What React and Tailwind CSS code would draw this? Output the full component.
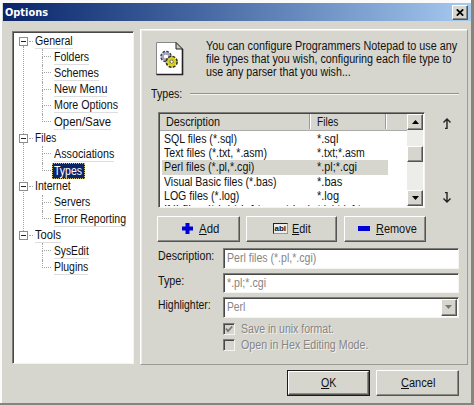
import { useLayoutEffect, useRef, useState } from "react";

/* Text squeezed horizontally to the width of the bitmap system font. */
function T({ w, children, className = "" }) {
  const ref = useRef(null);
  const [k, setK] = useState(1);
  useLayoutEffect(() => {
    setK(w / ref.current.offsetWidth);
  }, [w]);
  return (
    <span className={"block h-[14px] shrink-0 text-left leading-[14px] whitespace-nowrap " + className} style={{ width: w }}>
      <span ref={ref} className="inline-block origin-left" style={{ transform: `scaleX(${k})` }}>
        {children}
      </span>
    </span>
  );
}

const tree = [
  ["General", 38, [["Folders", 35], ["Schemes", 45], ["New Menu", 53], ["More Options", 64], ["Open/Save", 57]]],
  ["Files", 21, [["Associations", 60], ["Types", 28]]],
  ["Internet", 36, [["Servers", 36], ["Error Reporting", 72]]],
  ["Tools", 26, [["SysEdit", 35], ["Plugins", 34]]],
];

function TreeGroup({ name, w, items, last }) {
  const ruled = name === "General" || name === "Tools";
  return (
    <div className="relative">
      {!last && <div className="absolute top-[13px] bottom-[-4px] left-[9px] border-l border-dotted border-[#a5a5a5]" />}
      <div className="flex h-[16.2px] items-center">
        <svg className="ml-[5px] h-[9px] w-[9px]" viewBox="0 0 9 9" shapeRendering="crispEdges">
          <rect x=".5" y=".5" width="8" height="8" fill="#fff" stroke="#8d8d8d" />
          <path d="M2 4.5h5" stroke="#222" />
        </svg>
        <div className="ml-[1px] w-[4px] border-t border-dotted border-[#a5a5a5]" />
        <div className={"ml-[1.5px] border-b " + (ruled ? "border-[#dedede]" : "border-transparent")}>
          <T w={w}>{name}</T>
        </div>
      </div>
      {items.map(([label, lw], i) => (
        <div key={label} className="flex h-[16.2px] items-stretch">
          <div className="ml-[28px] flex w-[9px] flex-col">
            <div className="h-[8px] border-b border-l border-dotted border-[#a5a5a5]" />
            <div className={i < items.length - 1 ? "grow border-l border-dotted border-[#a5a5a5]" : "grow"} />
          </div>
          <div className="ml-[1px] flex items-center">
            {label === "Types" ? (
              <div className="border border-dotted border-[#c5b878] bg-[#0a246a] pr-[2px] pl-[1px] text-white">
                <T w={lw}>{label}</T>
              </div>
            ) : (
              <div className="ml-[2px] border-b border-[#dedede]">
                <T w={lw}>{label}</T>
              </div>
            )}
          </div>
        </div>
      ))}
    </div>
  );
}

const RAISED = "border border-t-white border-l-white border-r-[#555] border-b-[#555] bg-[#d6d6ce] shadow-[inset_-1px_-1px_0_#8a8a86] ";
const SUNKEN = "border border-t-[#7c7c78] border-l-[#7c7c78] border-r-[#f4f4f0] border-b-[#f4f4f0] shadow-[inset_1px_1px_0_#484848] ";

function Tri({ up, color = "#000" }) {
  return (
    <svg className="h-[4px] w-[7px]" viewBox="0 0 7 4">
      <path d={up ? "M0 4L3.5 0L7 4z" : "M0 0L3.5 4L7 0z"} fill={color} />
    </svg>
  );
}

const rows = [
  ["SQL files (*.sql)", 73, "*.sql", 21],
  ["Text files (*.txt, *.asm)", 103, "*.txt;*.asm", 48],
  ["Perl files (*.pl,*.cgi)", 90, "*.pl;*.cgi", 40],
  ["Visual Basic files (*.bas)", 113, "*.bas", 25],
  ["LOG files (*.log)", 75, "*.log", 22],
  ["INI files (*.ini,*.inf,*.reg,*.isu)", 148, "*.ini;*.inf;*.reg", 62],
];

function Field({ label, lw, text, tw, combo, tail = "mb-[4px]" }) {
  return (
    <div className={"flex h-[20.5px] " + tail}>
      <div className="w-[65px] pt-[1px]">
        <T w={lw}>{label}</T>
      </div>
      <div className={SUNKEN + "flex w-[236px] items-center bg-white py-[1px] pr-[1px] pl-[3px] text-[#858585]"}>
        <T w={tw}>{text}</T>
        {combo && (
          <div className={RAISED + "ml-auto flex h-[17px] w-[16px] items-center justify-center"}>
            <Tri color="#777" />
          </div>
        )}
      </div>
    </div>
  );
}

function Check({ on, text, w }) {
  return (
    <div className="flex h-[16px] items-center text-[#858585]">
      <div className={SUNKEN + "flex h-[12px] w-[12px] items-center justify-center"}>
        {on && (
          <svg className="h-[8px] w-[8px]" viewBox="0 0 8 8">
            <path d="M1 3.5L3 6L7.2 1.5" fill="none" stroke="#777" strokeWidth="1.8" />
          </svg>
        )}
      </div>
      <T w={w} className="ml-[6px] [text-shadow:1px_1px_0_#f4f4f0]">{text}</T>
    </div>
  );
}

export default function App() {
  return (
    <div className="h-[405px] w-[474px] overflow-hidden bg-[#85857f] pr-[3px] pb-[2px] font-['Liberation_Sans',Arial,sans-serif] text-[12px] text-[#111]">
      <div className="flex h-[403px] flex-col border-t-[3px] border-l-[2px] border-[#fafafa] bg-[#d6d6ce]">
        <div className="ml-[1px] flex h-[18px] shrink-0 items-center bg-linear-to-r from-[#0a246a] to-[#a6caf0] pr-[3px] pl-[2px]">
          <T w={43} className="font-['DejaVu_Sans',sans-serif] text-[10.5px] font-bold text-white">Options</T>
          <div className={RAISED + "ml-auto flex h-[15px] w-[16px] items-center justify-center"}>
            <svg className="h-[7px] w-[8px]" viewBox="0 0 8 7">
              <path d="M.8 .3L7.2 6.7M7.2 .3L.8 6.7" stroke="#000" strokeWidth="1.7" />
            </svg>
          </div>
        </div>

        <div className="flex shrink-0 pt-[8px] pl-[10px]">
          <div className={SUNKEN + "mt-[2px] h-[333px] w-[122px] bg-white pt-[1px] pl-[1px]"}>
            {tree.map(([n, w, items], i) => (
              <TreeGroup key={n} name={n} w={w} items={items} last={i === tree.length - 1} />
            ))}
          </div>

          <div className="ml-[6px] h-[336px] w-[328px] border border-t-white border-r-[#9a9a96] border-b-[#9a9a96] border-l-white shadow-[inset_1px_1px_0_#ecece8]">
            <div className="flex h-[57px] pt-[12px] pl-[15px]">
              <svg className="h-[34px] w-[28px]" viewBox="0 0 28 34">
                <path d="M.5 .5H20L26.5 7V32.5H.5z" fill="#fff" stroke="#888" />
                <path d="M26.5 7V32.5H.5" fill="none" stroke="#222" strokeWidth="1.6" />
                <path d="M20 .5L26.5 7H20z" fill="#c8c8c4" stroke="#222" />
                <circle cx="10" cy="14.5" r="4" fill="none" stroke="#34344a" strokeWidth="3.6" strokeDasharray="2.1 1" />
                <circle cx="10" cy="14.5" r="3.4" fill="none" stroke="#a4a4c4" strokeWidth="2.2" />
                <circle cx="15.7" cy="19.8" r="4.2" fill="none" stroke="#303000" strokeWidth="4" strokeDasharray="2.3 1" />
                <circle cx="15.7" cy="19.8" r="3.5" fill="none" stroke="#d8d022" strokeWidth="2.5" />
                <circle cx="15.7" cy="19.8" r="1.6" fill="#fff" stroke="#444400" strokeWidth=".7" />
              </svg>
              <div className="mt-[-3.5px] ml-[21.5px] flex flex-col">
                <T w={251} className="mb-[-.7px]">You can configure Programmers Notepad to use any</T>
                <T w={246} className="mb-[-.7px]">file types that you wish, configuring each file type to</T>
                <T w={145}>use any parser that you wish...</T>
              </div>
            </div>

            <div className="flex h-[14px] items-center pl-[10px]">
              <T w={31}>Types:</T>
              <div className="ml-[8px] w-[269px] border-t border-b border-t-[#92928e] border-b-[#f4f4f0]" />
            </div>

            <div className="mt-[10.5px] ml-[17px] flex h-[96px]">
              <div className={SUNKEN + "flex w-[267px] bg-white p-[1px]"}>
                <div className="flex min-w-0 grow flex-col overflow-hidden">
                  <div className="flex h-[17px] shrink-0 items-center border-b border-[#aaa] bg-[#d6d6ce]">
                    <div className="flex h-[15px] w-[151px] items-center border-r border-[#9a9a96] pl-[6px]">
                      <T w={54}>Description</T>
                    </div>
                    <div className="flex h-[15px] w-[76px] items-center border-r border-l border-r-[#9a9a96] border-l-white pl-[6px]">
                      <T w={21}>Files</T>
                    </div>
                    <div className="h-[15px] w-[21px] border-l border-white" />
                  </div>
                  <div className="mt-[1.5px] flex flex-col">
                    {rows.map(([d, dw, f, fw], i) => (
                      <div key={d} className="flex h-[14.2px]">
                        <div className={"ml-[2px] flex w-[226px] shrink-0 items-center pl-[1.5px] " + (i === 2 ? "bg-[#d6d6ce]" : "")}>
                          <T w={dw} className="mr-auto">{d}</T>
                          <div className="w-[71px]">
                            <T w={fw}>{f}</T>
                          </div>
                        </div>
                      </div>
                    ))}
                  </div>
                </div>
                <div className="flex w-[16px] shrink-0 flex-col bg-[#ecece8]">
                  <div className={RAISED + "flex h-[16px] items-center justify-center"}><Tri up /></div>
                  <div className={RAISED + "mt-[16px] h-[16px]"} />
                  <div className={RAISED + "mt-auto flex h-[16px] items-center justify-center"}><Tri /></div>
                </div>
              </div>
              <div className="ml-[17px] flex flex-col justify-between pt-[6px] pb-[5px]">
                <svg className="h-[11px] w-[10px]" viewBox="0 0 10 11">
                  <path d="M5 11V1M1.5 4.5L5 1L8.5 4.5M3 10.5H5.5" fill="none" stroke="#222" strokeWidth="1.4" />
                </svg>
                <svg className="h-[11px] w-[10px]" viewBox="0 0 10 11">
                  <path d="M5 0V10M1.5 6.5L5 10L8.5 6.5M3 .5H5.5" fill="none" stroke="#222" strokeWidth="1.4" />
                </svg>
              </div>
            </div>

            <div className="mt-[8px] ml-[16px] flex h-[26px]">
              <div className={RAISED + "flex w-[83px] items-center pl-[24px]"}>
                <svg className="mr-[6px] h-[11px] w-[11px]" viewBox="0 0 11 11">
                  <path d="M3.5 0h4v3.5H11v4H7.5V11h-4V7.5H0v-4h3.5z" fill="#0000d8" />
                </svg>
                <T w={20}><u>A</u>dd</T>
              </div>
              <div className={RAISED + "ml-[6px] flex w-[91px] items-center pl-[26px]"}>
                <div className="mr-[4px] flex h-[11px] w-[15px] items-center justify-center border border-t-[#222] border-r-[#999] border-b-[#999] border-l-[#222] bg-[#ecece8] text-[8px]">
                  <T w={12} className="font-bold">abl</T>
                </div>
                <T w={19}><u>E</u>dit</T>
              </div>
              <div className={RAISED + "ml-[7px] flex w-[82px] items-center pl-[13px]"}>
                <div className="mr-[6px] h-[5px] w-[12px] bg-[#0000d8]" />
                <T w={41}><u>R</u>emove</T>
              </div>
            </div>

            <div className="mt-[6.5px] ml-[16.5px]">
              <Field label="Description:" lw={56} text="Perl files (*.pl,*.cgi)" tw={89} />
              <Field label="Type:" lw={26} text="*.pl;*.cgi" tw={39} />
              <Field label="Highlighter:" lw={53} text="Perl" tw={18} combo tail="" />
            </div>
            <div className="mt-[3.5px] ml-[82px]">
              <Check on text="Save in unix format." w={93} />
              <Check text="Open in Hex Editing Mode." w={127} />
            </div>
          </div>
        </div>

        <div className="flex shrink-0 justify-end pt-[5px] pr-[12px]">
          <div className="h-[26px] w-[83px] border border-[#1c1c1c]">
            <div className={RAISED + "flex h-full items-center justify-center"}>
              <T w={15}><u>O</u>K</T>
            </div>
          </div>
          <div className={RAISED + "ml-[6px] flex h-[26px] w-[83px] items-center justify-center"}>
            <T w={34}><u>C</u>ancel</T>
          </div>
        </div>
      </div>
    </div>
  );
}
